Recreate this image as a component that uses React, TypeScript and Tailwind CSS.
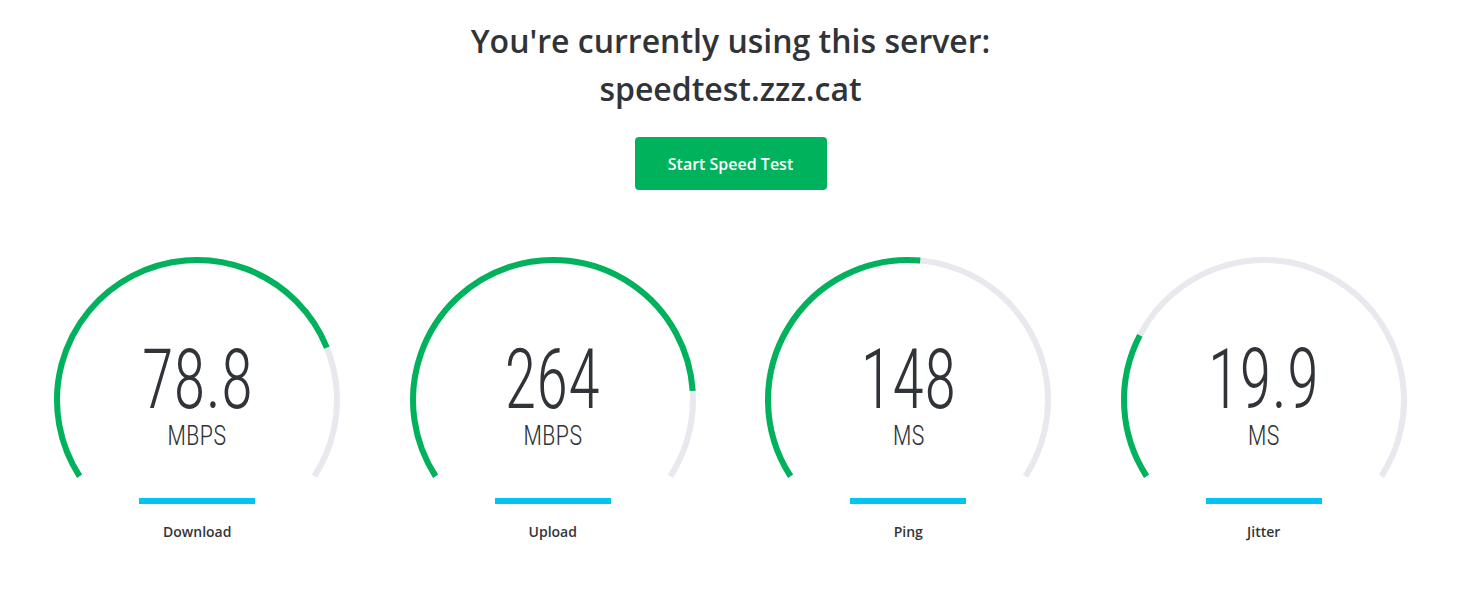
import React from "react";

const CX = 150;
const CY = 150;
const R = 140;

function pt(deg: number) {
  const t = (deg * Math.PI) / 180;
  return [CX + R * Math.sin(t), CY - R * Math.cos(t)];
}

function arc(a0: number, a1: number) {
  const [x0, y0] = pt(a0);
  const [x1, y1] = pt(a1);
  const large = a1 - a0 > 180 ? 1 : 0;
  return `M ${x0.toFixed(2)} ${y0.toFixed(2)} A ${R} ${R} 0 ${large} 1 ${x1.toFixed(2)} ${y1.toFixed(2)}`;
}

type G = { value: string; unit: string; label: string; frac: number };

const gauges: G[] = [
  { value: "78.8", unit: "MBPS", label: "Download", frac: 0.772 },
  { value: "264", unit: "MBPS", label: "Upload", frac: 0.845 },
  { value: "148", unit: "MS", label: "Ping", frac: 0.52 },
  { value: "19.9", unit: "MS", label: "Jitter", frac: 0.25 },
];

function Gauge({ g }: { g: G }) {
  const end = -125 + 250 * g.frac;
  return (
    <div className="flex flex-col items-center">
      <div className="relative w-[300px] h-[240px]">
        <svg width="300" height="240" viewBox="0 0 300 240" className="absolute left-0 top-0">
          <path d={arc(-123, 123)} fill="none" stroke="#e8e9ee" strokeWidth="6" />
          <path d={arc(-123, end)} fill="none" stroke="#00b25b" strokeWidth="6" />
        </svg>
        <div className="absolute left-0 right-0 top-[92px] flex flex-col items-center text-[#303438]" style={{ fontFamily: '"Roboto Condensed", "Liberation Sans Narrow", "DejaVu Sans Condensed", sans-serif' }}>
          <div className="text-[84px] leading-[76px] font-light scale-x-[0.78]">{g.value}</div>
          <div className="text-[28px] leading-[28px] font-light scale-x-[0.9] mt-[4px]">{g.unit}</div>
        </div>
      </div>
      <div className="w-[116px] h-[6px] bg-[#00c4f1] mt-[8px]" />
      <div className="mt-[18px] text-[14px] leading-[20px] font-semibold text-[#333539]">{g.label}</div>
    </div>
  );
}

export default function App() {
  return (
    <div className="w-[1461px] bg-white min-h-[601px]" style={{ fontFamily: '"Open Sans", "Noto Sans", sans-serif' }}>
      <div className="flex flex-col items-center pt-[17px]">
        <h1 className="text-[32px] leading-[48px] font-semibold text-[#303438]">You're currently using this server:</h1>
        <h2 className="text-[32px] leading-[48px] font-semibold text-[#303438]">speedtest.zzz.cat</h2>
        <button className="mt-[24px] w-[192px] h-[53px] rounded-[4px] bg-[#00b25b] text-white text-[16px] font-semibold">Start Speed Test</button>
      </div>
      <div className="grid grid-cols-4 w-[1422px] mx-auto mt-[60px]">
        {gauges.map((g) => (
          <Gauge key={g.label} g={g} />
        ))}
      </div>
    </div>
  );
}
